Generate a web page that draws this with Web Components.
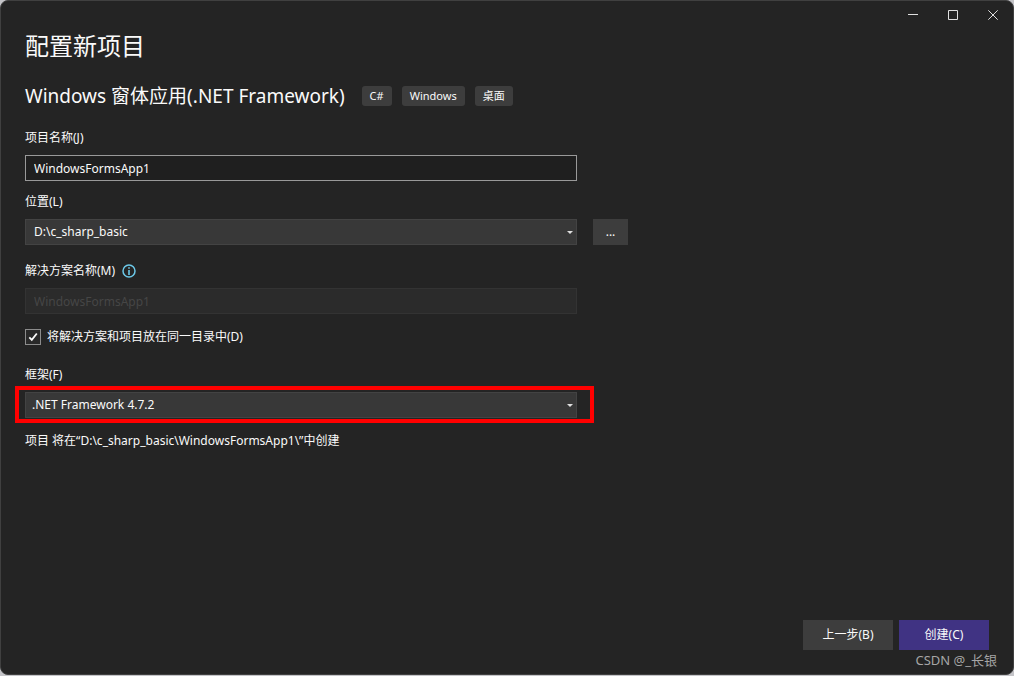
<!DOCTYPE html>
<html lang="zh-CN">
<head>
<meta charset="utf-8">
<meta name="viewport" content="width=device-width, initial-scale=1">
<title>配置新项目</title>
<style>
    html, body {
        height: 100%;
        margin: 0;
    }

    body {
        background: #c4c4c8;
        color: #fafafa;
        font: 12px/20px "Noto Sans", "Noto Sans CJK SC", sans-serif;
    }
</style>
</head>
<body>
<project-dialog></project-dialog>

<script>
// Caption buttons of the window
class WindowControls extends HTMLElement {
    constructor() {
        super();
        this.attachShadow({ mode: 'open' });
        this.shadowRoot.innerHTML = `
            <style>
            :host {
                display: flex;
                justify-content: flex-end;
            }

            button {
                display: grid;
                place-items: center;
                width: 40px;
                height: 28px;
                padding: 0;
                border: 0;
                background: none;
                color: #e0e0e0;
            }

            svg {
                fill: none;
                stroke: currentColor;
            }
            </style>

            <button type="button" aria-label="最小化"><svg width="10" height="10"><path d="M0 4.5h10"/></svg></button>
            <button type="button" aria-label="最大化"><svg width="10" height="10"><path d="M.5 .5h9v9h-9z"/></svg></button>
            <button type="button" aria-label="关闭"><svg width="10" height="10"><path d="M.3 .3l9.4 9.4M9.7 .3L.3 9.7"/></svg></button>
        `;
    }
}
customElements.define('window-controls', WindowControls);

// Small rounded tag next to the template name
class TagChip extends HTMLElement {
    constructor() {
        super();
        this.attachShadow({ mode: 'open' });
        this.shadowRoot.innerHTML = `
            <style>
            :host {
                display: block;
                padding: 0 8px;
                border-radius: 3px;
                background: #3d3d3d;
                font-size: 11px;
                line-height: 20px;
            }
            </style>
            <slot></slot>
        `;
    }
}
customElements.define('tag-chip', TagChip);

// Label with a text box
class TextField extends HTMLElement {
    constructor() {
        super();
        this.attachShadow({ mode: 'open' });
        this.shadowRoot.innerHTML = `
            <style>
            :host {
                display: block;
            }

            .caption {
                display: flex;
                align-items: center;
                gap: 7px;
                margin-bottom: 7px;
            }

            input {
                display: block;
                box-sizing: border-box;
                width: 100%;
                height: 26px;
                padding: 0 8px;
                border: 1px solid #999;
                border-radius: 0;
                outline: 0;
                background: #1f1f1f;
                color: #fafafa;
                font: inherit;
            }

            input:disabled {
                border-color: #333;
                background: #2b2b2b;
                color: #464646;
            }
            </style>

            <div class="caption"><label for="box"></label><slot></slot></div>
            <input id="box" type="text">
        `;
    }

    connectedCallback() {
        const input = this.shadowRoot.querySelector('input');
        this.shadowRoot.querySelector('label').textContent = this.getAttribute('label');
        input.value = this.getAttribute('value');
        input.disabled = this.hasAttribute('disabled');
    }
}
customElements.define('text-field', TextField);

// Label with a drop-down
class SelectField extends HTMLElement {
    constructor() {
        super();
        this.attachShadow({ mode: 'open' });
        this.shadowRoot.innerHTML = `
            <style>
            :host {
                display: block;
            }

            label {
                display: block;
                margin-bottom: 7px;
            }

            .box {
                position: relative;
                display: grid;
                align-items: center;
            }

            select, svg {
                grid-area: 1 / 1;
            }

            select {
                appearance: none;
                box-sizing: border-box;
                width: 100%;
                height: 26px;
                padding: 0 20px 0 var(--indent, 8px);
                border: 1px solid #434343;
                border-radius: 0;
                outline: 0;
                background: #383838;
                color: #fafafa;
                font: inherit;
            }

            svg {
                justify-self: end;
                margin-right: 4px;
                fill: #e0e0e0;
                pointer-events: none;
            }

            /* red frame drawn around the drop-down */
            :host([marked]) .box::after {
                content: "";
                position: absolute;
                inset: -6px -17px -5px -10px;
                border: 4px solid #f00;
                pointer-events: none;
            }
            </style>

            <label for="list"></label>
            <div class="box">
                <select id="list"><option></option></select>
                <svg width="6" height="3"><path d="M0 0h6L3 3z"/></svg>
            </div>
        `;
    }

    connectedCallback() {
        this.shadowRoot.querySelector('label').textContent = this.getAttribute('label');
        this.shadowRoot.querySelector('option').textContent = this.getAttribute('value');
    }
}
customElements.define('select-field', SelectField);

// Tick box with its text
class CheckField extends HTMLElement {
    constructor() {
        super();
        this.attachShadow({ mode: 'open' });
        this.shadowRoot.innerHTML = `
            <style>
            :host {
                display: block;
            }

            label {
                display: flex;
                align-items: center;
                gap: 6px;
            }

            .tick {
                display: grid;
            }

            input, svg {
                grid-area: 1 / 1;
            }

            input {
                appearance: none;
                box-sizing: border-box;
                width: 16px;
                height: 16px;
                margin: 0;
                border: 1px solid #8c8c8c;
                background: #292929;
            }

            svg {
                fill: none;
                stroke: #fafafa;
                stroke-width: 1.8;
                pointer-events: none;
            }

            input:not(:checked) + svg {
                visibility: hidden;
            }
            </style>

            <label>
                <span class="tick">
                    <input type="checkbox" checked>
                    <svg width="16" height="16"><path d="M4.3 8.3l2.5 2.5 5-6.3"/></svg>
                </span>
                <span><slot></slot></span>
            </label>
        `;
    }
}
customElements.define('check-field', CheckField);

// Flat push button
class FlatButton extends HTMLElement {
    constructor() {
        super();
        this.attachShadow({ mode: 'open' });
        this.shadowRoot.innerHTML = `
            <style>
            :host {
                display: block;
            }

            button {
                display: block;
                box-sizing: border-box;
                width: 100%;
                height: var(--height, 30px);
                padding: 0;
                border: 0;
                background: #3d3d3d;
                color: #fafafa;
                font: inherit;
            }

            :host([primary]) button {
                background: #403383;
            }
            </style>
            <button type="button"><slot></slot></button>
        `;
    }
}
customElements.define('flat-button', FlatButton);

// The whole "configure your new project" window
class ProjectDialog extends HTMLElement {
    constructor() {
        super();
        this.attachShadow({ mode: 'open' });
        this.shadowRoot.innerHTML = `
            <style>
            :host {
                position: relative;
                display: flex;
                flex-direction: column;
                box-sizing: border-box;
                height: calc(100% - 1px);
                border: 1px solid #404040;
                border-radius: 8px;
                background: #242424;
                overflow: hidden;
            }

            main {
                flex: 1;
                padding: 0 24px;
            }

            h1, h2 {
                margin: 0;
                font-weight: 400;
            }

            h1 {
                font-size: 24px;
                line-height: 34px;
            }

            .template {
                display: flex;
                flex-wrap: wrap;
                align-items: center;
                gap: 10px;
                margin: 19px 0 18px;
            }

            h2 {
                margin-right: 7px;
                font-size: 19px;
                line-height: 28px;
            }

            form {
                display: grid;
                grid-template-columns: minmax(0, 552px) 35px;
                column-gap: 16px;
                align-items: end;
            }

            form > * {
                grid-column: 1;
            }

            .browse {
                --height: 26px;
                grid-column: 2;
            }

            .location {
                margin-top: 11px;
            }

            .solution {
                margin-top: 16px;
            }

            check-field {
                margin-top: 13px;
            }

            .framework {
                --indent: 6px;
                margin-top: 18px;
            }

            p {
                margin: 13px 0 0;
            }

            .info {
                fill: none;
                stroke: #6cc8e8;
            }

            footer {
                display: flex;
                justify-content: flex-end;
                gap: 6px;
                padding: 0 24px 24px;
            }

            footer flat-button {
                width: 90px;
            }

            .watermark {
                position: absolute;
                right: 16px;
                bottom: 4px;
                color: #a6a6a6;
                font-size: 13px;
                pointer-events: none;
            }
            </style>

            <window-controls></window-controls>
            <main>
                <h1>配置新项目</h1>
                <div class="template">
                    <h2>Windows 窗体应用(.NET Framework)</h2>
                    <tag-chip>C#</tag-chip>
                    <tag-chip>Windows</tag-chip>
                    <tag-chip>桌面</tag-chip>
                </div>
                <form>
                    <text-field label="项目名称(J)" value="WindowsFormsApp1"></text-field>
                    <select-field class="location" label="位置(L)" value="D:\\c_sharp_basic"></select-field>
                    <flat-button class="browse">...</flat-button>
                    <text-field class="solution" label="解决方案名称(M)" value="WindowsFormsApp1" disabled>
                        <svg class="info" width="14" height="14"><circle cx="7" cy="7" r="6" stroke-width="1.5"/><path d="M7 3.2v1.6M7 6v5" stroke-width="1.6"/></svg>
                    </text-field>
                    <check-field>将解决方案和项目放在同一目录中(D)</check-field>
                    <select-field class="framework" label="框架(F)" value=".NET Framework 4.7.2" marked></select-field>
                </form>
                <p>项目 将在“D:\\c_sharp_basic\\WindowsFormsApp1\\”中创建</p>
            </main>
            <footer>
                <flat-button>上一步(B)</flat-button>
                <flat-button primary>创建(C)</flat-button>
            </footer>
            <div class="watermark">CSDN @_长银</div>
        `;
    }
}
customElements.define('project-dialog', ProjectDialog);
</script>
</body>
</html>
